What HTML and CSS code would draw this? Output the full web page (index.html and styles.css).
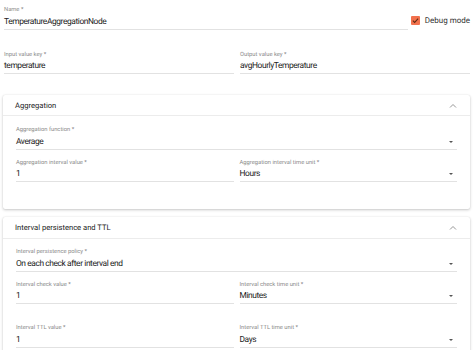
FILE: index.html
```html
<!DOCTYPE html>
<html lang="en">
<head>
    <meta charset="UTF-8">
    <title>Aggregation node</title>
    <link rel="stylesheet" href="styles.css">
</head>
<body>
    <div class="config">
        <div class="row top-row">
            <div class="field name-field">
                <label>Name *</label>
                <div class="value">TemperatureAggregationNode</div>
            </div>
            <div class="debug">
                <span class="checkbox">
                    <svg width="7" height="7" viewBox="0 0 24 24"><path d="M3 12.5l6 6L21 5.5" fill="none" stroke="#5b2a12" stroke-width="3.5"/></svg>
                </span>
                <span>Debug mode</span>
            </div>
        </div>

        <div class="row keys-row">
            <div class="field">
                <label>Input value key *</label>
                <div class="value">temperature</div>
            </div>
            <div class="field">
                <label>Output value key *</label>
                <div class="value">avgHourlyTemperature</div>
            </div>
        </div>

        <div class="panel">
            <div class="panel-header">
                <span>Aggregation</span>
                <svg class="chevron" width="8" height="5" viewBox="0 0 8 5"><path d="M1 4.5L4 1.5L7 4.5" fill="none" stroke="#8a8a8a" stroke-width="0.9"/></svg>
            </div>
            <div class="panel-body">
                <div class="field select">
                    <label>Aggregation function *</label>
                    <div class="value">Average</div>
                </div>
                <div class="row gap-sm">
                    <div class="field">
                        <label>Aggregation interval value *</label>
                        <div class="value">1</div>
                    </div>
                    <div class="field select">
                        <label>Aggregation interval time unit *</label>
                        <div class="value">Hours</div>
                    </div>
                </div>
            </div>
        </div>

        <div class="panel second">
            <div class="panel-header">
                <span>Interval persistence and TTL</span>
                <svg class="chevron" width="8" height="5" viewBox="0 0 8 5"><path d="M1 4.5L4 1.5L7 4.5" fill="none" stroke="#8a8a8a" stroke-width="0.9"/></svg>
            </div>
            <div class="panel-body">
                <div class="field select">
                    <label>Interval persistence policy *</label>
                    <div class="value">On each check after interval end</div>
                </div>
                <div class="row gap-sm">
                    <div class="field">
                        <label>Interval check value *</label>
                        <div class="value">1</div>
                    </div>
                    <div class="field select">
                        <label>Interval check time unit *</label>
                        <div class="value">Minutes</div>
                    </div>
                </div>
                <div class="row gap-lg">
                    <div class="field">
                        <label>Interval TTL value *</label>
                        <div class="value">1</div>
                    </div>
                    <div class="field select">
                        <label>Interval TTL time unit *</label>
                        <div class="value">Days</div>
                    </div>
                </div>
            </div>
        </div>
    </div>
</body>
</html>
```

FILE: styles.css
```css
* {
    margin: 0;
    padding: 0;
    box-sizing: border-box;
    font-family: Roboto, 'Liberation Sans', sans-serif;
    text-rendering: geometricPrecision;
}

body {
    background-color: #fff;
    width: 474px;
    height: 350px;
    overflow: hidden;
}

.config {
    padding: 7px 4px 0 4px;
}

.row {
    display: flex;
    gap: 6px;
}

.row > .field {
    flex: 1;
}

.field {
    position: relative;
    border-bottom: 1px solid #e2e2e2;
}

.field label {
    display: block;
    font-size: 5.8px;
    line-height: 7px;
    margin-bottom: 1.5px;
    color: #8a8a8a;
}

.field .value {
    font-size: 8.4px;
    letter-spacing: -0.4px;
    line-height: 13px;
    color: #222;
}

.select::after {
    content: '';
    position: absolute;
    right: 4px;
    bottom: 6px;
    border-left: 2px solid transparent;
    border-right: 2px solid transparent;
    border-top: 2.5px solid #555;
}

.top-row {
    gap: 0;
}

.name-field {
    flex: 0 0 406px;
}

.debug {
    display: flex;
    align-items: center;
    gap: 5px;
    margin-left: 3px;
    padding-top: 4px;
    font-size: 8px;
    color: #333;
}

.checkbox {
    width: 9px;
    height: 9px;
    border-radius: 1px;
    background-color: #f2714d;
    display: inline-flex;
    justify-content: center;
    align-items: center;
}

.keys-row {
    margin-top: 22px;
}

.panel {
    margin: 21px 0 0 -1px;
    width: 467px;
    background-color: #fff;
    border-radius: 2px;
    box-shadow: 0 1px 3px rgba(0, 0, 0, 0.22), 0 0 1px rgba(0, 0, 0, 0.12);
}

.panel.second {
    margin-top: 8px;
}

.panel-header {
    height: 21px;
    display: flex;
    align-items: center;
    justify-content: space-between;
    padding: 0 13px 0 12px;
    font-size: 7.6px;
    color: #222;
    border-bottom: 1px solid #ececec;
}

.second .panel-header {
    height: 22px;
}

.panel-body {
    padding: 11px 13px 27px 13px;
}

.second .panel-body {
    padding-top: 10px;
    padding-bottom: 10px;
}

.gap-sm {
    margin-top: 10px;
}

.gap-lg {
    margin-top: 21px;
}
```
